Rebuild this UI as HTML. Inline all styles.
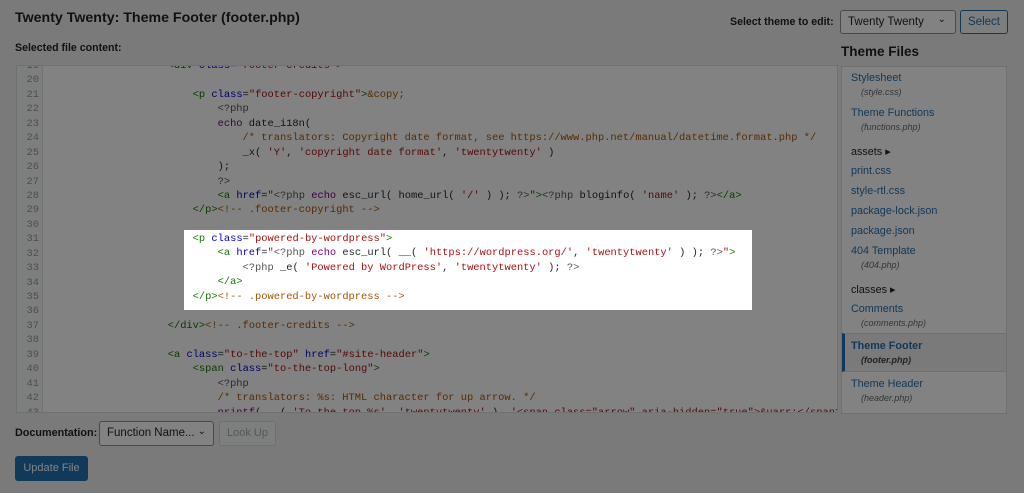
<!DOCTYPE html>
<html><head><meta charset="utf-8">
<style>
*{margin:0;padding:0;box-sizing:border-box}
body{width:1024px;height:493px;overflow:hidden;background:#f0f0f1;font-family:"Liberation Sans",sans-serif;position:relative;color:#1d2327}
.abs{position:absolute}
h1{position:absolute;left:15px;top:10px;font-size:14.2px;font-weight:bold;color:#1d2327}
.sel{left:15px;top:42px;font-size:10.6px;font-weight:bold}
.code{left:16px;top:65px;width:822px;height:348px;background:#fff;border:1px solid #dcdcde;overflow:hidden}
.gut{position:absolute;left:0;top:0;width:26px;height:100%;background:#f6f7f7;border-right:1px solid #e2e2e2}
.lines{position:absolute;left:0;top:-7px;width:100%}
.ln{height:14.45px;line-height:14.45px;font-family:"Liberation Mono",monospace;font-size:10.4px;white-space:pre;position:relative}
.ln .n{position:absolute;left:0;width:22px;text-align:right;color:#999}
.ln .c{position:absolute;left:26px}
.t{color:#170}.a{color:#00c}.s{color:#a11}.m{color:#a50}.k{color:#708}.p{color:#555}
.side{left:841px;top:66px;width:166px;height:348px;background:#fff;border:1px solid #dcdcde}
.it{position:absolute;left:9px;font-size:10.8px;color:#2271b1}
.fn{position:absolute;left:19px;font-size:9px;font-style:italic;color:#646970}
.dir{position:absolute;left:9px;font-size:10.8px;color:#1d2327}
.act{position:absolute;left:0;top:266px;width:164px;height:39px;background:#f0f0f1;border-left:3px solid #2271b1;border-top:1px solid #dcdcde;border-bottom:1px solid #dcdcde}
.overlay{position:absolute;left:0;top:0;width:1024px;height:493px;background:rgba(0,0,0,0.49);z-index:5}
.hl{position:absolute;left:184px;top:230px;width:568px;height:80px;background:#fff;z-index:10;overflow:hidden}
.hl .inner{position:absolute;left:-167px;top:2px;width:800px}
</style></head><body>
<h1>Twenty Twenty: Theme Footer (footer.php)</h1>
<div class="abs sel">Selected file content:</div>

<div class="abs" style="left:730px;top:16px;font-size:10.6px;font-weight:bold;white-space:nowrap">Select theme to edit:</div>
<div class="abs" style="left:840px;top:10px;width:116px;height:24px;border:1px solid #8c8f94;border-radius:3px;background:#fff;font-size:11.5px;line-height:22px;padding-left:7px">Twenty Twenty<span style="position:absolute;right:9px;top:-2px;font-size:10px">&#8964;</span></div>
<div class="abs" style="left:960px;top:10px;width:48px;height:24px;border:1px solid #2271b1;border-radius:3px;background:#f6f7f7;color:#2271b1;font-size:11.5px;line-height:22px;text-align:center">Select</div>
<div class="abs" style="left:841px;top:44px;font-size:13.5px;font-weight:bold">Theme Files</div>

<div class="abs code">
<div class="gut"></div>
<div class="lines">
<div class="ln"><span class="n">19</span><span class="c">                    <span class="t">&lt;div</span> <span class="a">class</span>=<span class="s">"footer-credits"</span><span class="t">&gt;</span></span></div>
<div class="ln"><span class="n">20</span></div>
<div class="ln"><span class="n">21</span><span class="c">                        <span class="t">&lt;p</span> <span class="a">class</span>=<span class="s">"footer-copyright"</span><span class="t">&gt;</span><span class="m">&amp;copy;</span></span></div>
<div class="ln"><span class="n">22</span><span class="c">                            <span class="p">&lt;?php</span></span></div>
<div class="ln"><span class="n">23</span><span class="c">                            <span class="k">echo</span> date_i18n(</span></div>
<div class="ln"><span class="n">24</span><span class="c">                                <span class="m">/* translators: Copyright date format, see https://www.php.net/manual/datetime.format.php */</span></span></div>
<div class="ln"><span class="n">25</span><span class="c">                                _x( <span class="s">'Y'</span>, <span class="s">'copyright date format'</span>, <span class="s">'twentytwenty'</span> )</span></div>
<div class="ln"><span class="n">26</span><span class="c">                            );</span></div>
<div class="ln"><span class="n">27</span><span class="c">                            <span class="p">?&gt;</span></span></div>
<div class="ln"><span class="n">28</span><span class="c">                            <span class="t">&lt;a</span> <span class="a">href</span>=<span class="s">"</span><span class="p">&lt;?php</span> <span class="k">echo</span> esc_url( home_url( <span class="s">'/'</span> ) ); <span class="p">?&gt;</span><span class="s">"</span><span class="t">&gt;</span><span class="p">&lt;?php</span> bloginfo( <span class="s">'name'</span> ); <span class="p">?&gt;</span><span class="t">&lt;/a&gt;</span></span></div>
<div class="ln"><span class="n">29</span><span class="c">                        <span class="t">&lt;/p&gt;</span><span class="m">&lt;!-- .footer-copyright --&gt;</span></span></div>
<div class="ln"><span class="n">30</span></div>
<div class="ln"><span class="n">31</span></div>
<div class="ln"><span class="n">32</span></div>
<div class="ln"><span class="n">33</span></div>
<div class="ln"><span class="n">34</span></div>
<div class="ln"><span class="n">35</span></div>
<div class="ln"><span class="n">36</span></div>
<div class="ln"><span class="n">37</span><span class="c">                    <span class="t">&lt;/div&gt;</span><span class="m">&lt;!-- .footer-credits --&gt;</span></span></div>
<div class="ln"><span class="n">38</span></div>
<div class="ln"><span class="n">39</span><span class="c">                    <span class="t">&lt;a</span> <span class="a">class</span>=<span class="s">"to-the-top"</span> <span class="a">href</span>=<span class="s">"#site-header"</span><span class="t">&gt;</span></span></div>
<div class="ln"><span class="n">40</span><span class="c">                        <span class="t">&lt;span</span> <span class="a">class</span>=<span class="s">"to-the-top-long"</span><span class="t">&gt;</span></span></div>
<div class="ln"><span class="n">41</span><span class="c">                            <span class="p">&lt;?php</span></span></div>
<div class="ln"><span class="n">42</span><span class="c">                            <span class="m">/* translators: %s: HTML character for up arrow. */</span></span></div>
<div class="ln"><span class="n">43</span><span class="c">                            <span class="k">printf</span>( __( <span class="s">'To the top %s'</span>, <span class="s">'twentytwenty'</span> ), <span class="s">'&lt;span class="arrow" aria-hidden="true"&gt;&amp;uarr;&lt;/span&gt;'</span> );</span></div>
</div>
</div>

<div class="abs side">
<div class="it" style="top:5px">Stylesheet</div>
<div class="fn" style="top:20px">(style.css)</div>
<div class="it" style="top:40px">Theme Functions</div>
<div class="fn" style="top:55px">(functions.php)</div>
<div class="dir" style="top:78px">assets &#9656;</div>
<div class="it" style="top:98px">print.css</div>
<div class="it" style="top:118px">style-rtl.css</div>
<div class="it" style="top:138px">package-lock.json</div>
<div class="it" style="top:158px">package.json</div>
<div class="it" style="top:178px">404 Template</div>
<div class="fn" style="top:193px">(404.php)</div>
<div class="dir" style="top:216px">classes &#9656;</div>
<div class="it" style="top:236px">Comments</div>
<div class="fn" style="top:251px">(comments.php)</div>
<div class="act"></div>
<div class="it" style="top:273px;font-weight:bold">Theme Footer</div>
<div class="fn" style="top:288px;font-weight:bold;color:#3c434a">(footer.php)</div>
<div class="it" style="top:311px">Theme Header</div>
<div class="fn" style="top:326px">(header.php)</div>
</div>

<div class="abs" style="left:15px;top:427px;font-size:10.8px;font-weight:bold;color:#1d2327;white-space:nowrap">Documentation:</div>
<div class="abs" style="left:99px;top:421px;width:115px;height:25px;border:1px solid #8c8f94;border-radius:3px;background:#fff;font-size:11.5px;line-height:23px;padding-left:7px;white-space:nowrap">Function Name...<span style="position:absolute;right:7px;top:-2px;font-size:10px">&#8964;</span></div>
<div class="abs" style="left:219px;top:421px;width:57px;height:25px;border:1px solid #dcdcde;border-radius:3px;background:#f6f7f7;color:#a7aaad;font-size:11px;line-height:23px;text-align:center">Look Up</div>
<div class="abs" style="left:15px;top:456px;width:73px;height:25px;border-radius:3px;background:#2271b1;color:#fff;font-size:11px;line-height:25px;text-align:center">Update File</div>

<div class="overlay"></div>

<div class="hl"><div class="inner">
<div class="ln"><span class="c">                        <span class="t">&lt;p</span> <span class="a">class</span>=<span class="s">"powered-by-wordpress"</span><span class="t">&gt;</span></span></div>
<div class="ln"><span class="c">                            <span class="t">&lt;a</span> <span class="a">href</span>=<span class="s">"</span><span class="p">&lt;?php</span> <span class="k">echo</span> esc_url( __( <span class="s">'https://wordpress.org/'</span>, <span class="s">'twentytwenty'</span> ) ); <span class="p">?&gt;</span><span class="s">"</span><span class="t">&gt;</span></span></div>
<div class="ln"><span class="c">                                <span class="p">&lt;?php</span> _e( <span class="s">'Powered by WordPress'</span>, <span class="s">'twentytwenty'</span> ); <span class="p">?&gt;</span></span></div>
<div class="ln"><span class="c">                            <span class="t">&lt;/a&gt;</span></span></div>
<div class="ln"><span class="c">                        <span class="t">&lt;/p&gt;</span><span class="m">&lt;!-- .powered-by-wordpress --&gt;</span></span></div>
</div></div>
</body></html>
